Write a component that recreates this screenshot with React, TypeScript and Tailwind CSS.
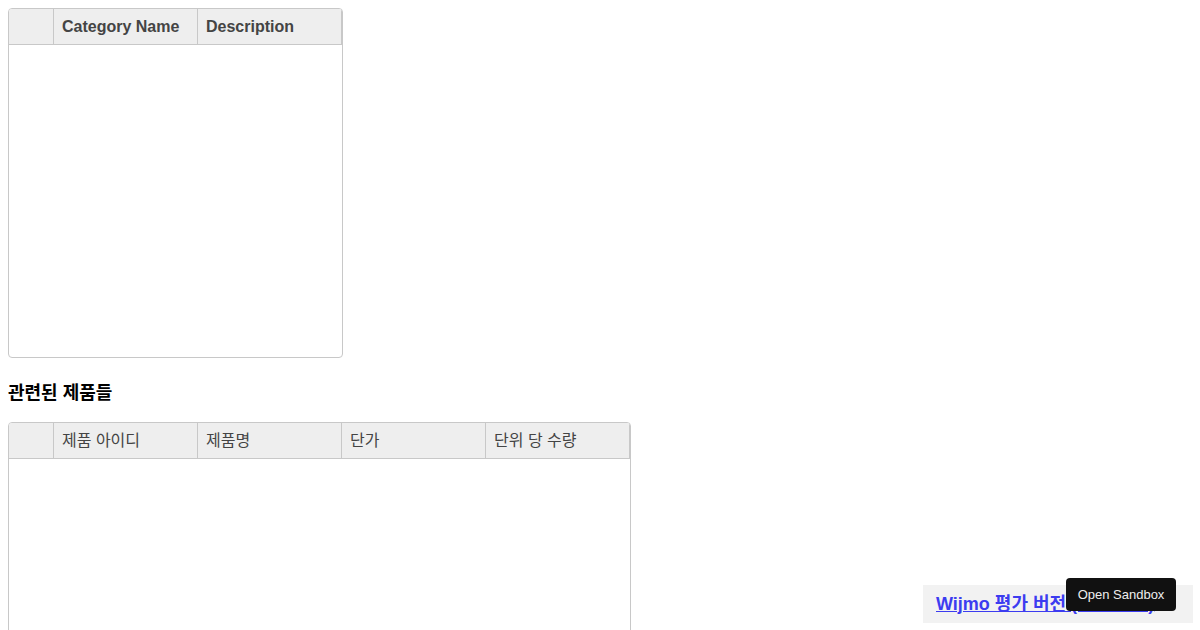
import React from 'react'

const FONT = "font-['Liberation_Sans','Noto_Sans_CJK_KR',sans-serif]"

type Col = { label: string; bold?: boolean }

function Grid({ cols, height }: { cols: Col[]; height: string }) {
  return (
    <div className={`inline-flex flex-col border border-[#c8c8c8] rounded-[4px] overflow-hidden bg-white ${height}`}>
      <div className="flex h-[36px] bg-[#eeeeee] border-b border-[#c8c8c8]">
        <div className="w-[45px] border-r border-[#c8c8c8]" />
        {cols.map((c) => (
          <div key={c.label}
            className={`w-[144px] border-r border-[#c8c8c8] flex items-center pl-[8px] text-[16px] text-[#444] ${c.bold ? 'font-bold' : 'font-normal'}`}>
            {c.label}
          </div>
        ))}
      </div>
      <div className="flex-1" />
    </div>
  )
}

export default function App() {
  return (
    <div className={`min-h-[630px] p-[8px] bg-white ${FONT}`}>
      <Grid height="h-[350px]" cols={[
        { label: 'Category Name', bold: true },
        { label: 'Description', bold: true },
      ]} />

      <h3 className="mt-[24px] mb-[18px] text-[18px] leading-[22px] font-bold text-black">관련된 제품들</h3>

      <Grid height="h-[350px]" cols={[
        { label: '제품 아이디' },
        { label: '제품명' },
        { label: '단가' },
        { label: '단위 당 수량' },
      ]} />

      {/* evaluation banner */}
      <div className="fixed right-[7px] bottom-[7px] w-[270px] h-[38px] bg-[#f2f2f2] flex items-center pl-[13px] overflow-hidden whitespace-nowrap">
        <a href="#" className="text-[18px] font-bold text-[#3c3cf0] underline">Wijmo 평가 버전 (만료 예정)</a>
      </div>
      <div className="fixed left-[1066px] top-[578px] w-[110px] h-[33px] rounded-[4px] bg-[#111] text-[#eee] text-[13px] flex items-center justify-center">
        Open Sandbox
      </div>
    </div>
  )
}
